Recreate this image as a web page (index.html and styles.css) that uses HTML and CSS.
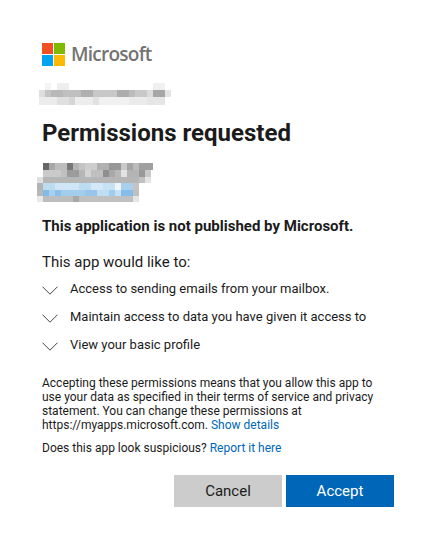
FILE: index.html
```html
<!DOCTYPE html>
<html lang="en">
<head>
<meta charset="utf-8">
<title>Permissions requested</title>
<link rel="stylesheet" href="styles.css">
</head>
<body>
<main class="card">
  <div class="brand">
    <svg class="logo" width="23" height="23" viewBox="0 0 23 23" aria-hidden="true">
      <rect width="11" height="11" fill="#f25022"/>
      <rect x="12" width="11" height="11" fill="#7fba00"/>
      <rect y="12" width="11" height="11" fill="#00a4ef"/>
      <rect x="12" y="12" width="11" height="11" fill="#ffb900"/>
    </svg>
    <span class="wordmark">Microsoft</span>
  </div>
  <svg class="blob blob-account" width="132" height="23" viewBox="0 0 132 23" aria-hidden="true">
    <g class="pixels">
      <rect x="0" y="0" width="132" height="23" fill="#fff"/>
      <rect x="6" y="0" width="6" height="7" fill="#f4f4f4"/>
      <rect x="18" y="0" width="12" height="7" fill="#eee"/>
      <rect x="114" y="0" width="12" height="7" fill="#f0f0f0"/>
      <rect x="0" y="7" width="6" height="7" fill="#dedede"/>
      <rect x="6" y="7" width="6" height="7" fill="#c4c4c4"/>
      <rect x="12" y="7" width="12" height="7" fill="#b8b8b8"/>
      <rect x="24" y="7" width="18" height="7" fill="#c0c0c0"/>
      <rect x="42" y="7" width="12" height="7" fill="#b0b0b0"/>
      <rect x="54" y="7" width="24" height="7" fill="#c8c8c8"/>
      <rect x="78" y="7" width="12" height="7" fill="#adadad"/>
      <rect x="90" y="7" width="6" height="7" fill="#bcbcbc"/>
      <rect x="96" y="7" width="12" height="7" fill="#c9c9c9"/>
      <rect x="108" y="7" width="6" height="7" fill="#dcdcdc"/>
      <rect x="114" y="7" width="12" height="7" fill="#a6a6a6"/>
      <rect x="126" y="7" width="6" height="7" fill="#e4e4e4"/>
      <rect x="0" y="14" width="18" height="8" fill="#ececec"/>
      <rect x="18" y="14" width="12" height="8" fill="#e0e0e0"/>
      <rect x="30" y="14" width="6" height="8" fill="#d6d6d6"/>
      <rect x="36" y="14" width="18" height="8" fill="#ededed"/>
      <rect x="54" y="14" width="6" height="8" fill="#e2e2e2"/>
      <rect x="60" y="14" width="30" height="8" fill="#f1f1f1"/>
      <rect x="90" y="14" width="18" height="8" fill="#ebebeb"/>
      <rect x="108" y="14" width="18" height="8" fill="#e6e6e6"/>
    </g>
  </svg>
  <h1 class="title">Permissions requested</h1>
  <svg class="blob blob-app" width="116" height="39" viewBox="0 0 116 39" aria-hidden="true">
    <g class="pixels">
      <rect x="6" y="0" width="6" height="7" fill="#666"/>
      <rect x="12" y="0" width="6" height="7" fill="#a8a8a8"/>
      <rect x="18" y="0" width="12" height="7" fill="#bdbdbd"/>
      <rect x="30" y="0" width="6" height="7" fill="#777"/>
      <rect x="36" y="0" width="6" height="7" fill="#b4b4b4"/>
      <rect x="42" y="0" width="6" height="7" fill="#c4c4c4"/>
      <rect x="48" y="0" width="12" height="7" fill="#cdcdcd"/>
      <rect x="60" y="0" width="12" height="7" fill="#b0b0b0"/>
      <rect x="72" y="0" width="12" height="7" fill="#979797"/>
      <rect x="84" y="0" width="6" height="7" fill="#c8c8c8"/>
      <rect x="90" y="0" width="6" height="7" fill="#a4a4a4"/>
      <rect x="96" y="0" width="6" height="7" fill="#bbb"/>
      <rect x="102" y="0" width="14" height="7" fill="#a0a0a0"/>
      <rect x="6" y="7" width="18" height="7" fill="#cacaca"/>
      <rect x="24" y="7" width="6" height="7" fill="#c0c0c0"/>
      <rect x="30" y="7" width="12" height="7" fill="#9c9c9c"/>
      <rect x="42" y="7" width="6" height="7" fill="#b6b6b6"/>
      <rect x="48" y="7" width="6" height="7" fill="#d4d4d4"/>
      <rect x="54" y="7" width="12" height="7" fill="#c0c0c0"/>
      <rect x="66" y="7" width="6" height="7" fill="#8f8f8f"/>
      <rect x="72" y="7" width="6" height="7" fill="#a8a8a8"/>
      <rect x="78" y="7" width="6" height="7" fill="#b8b8b8"/>
      <rect x="84" y="7" width="6" height="7" fill="#e2e2e2"/>
      <rect x="90" y="7" width="12" height="7" fill="#b4b4b4"/>
      <rect x="102" y="7" width="6" height="7" fill="#999"/>
      <rect x="108" y="7" width="6" height="7" fill="#c8c8c8"/>
      <rect x="0" y="14" width="6" height="6" fill="#e0e0e0"/>
      <rect x="6" y="14" width="96" height="6" fill="#b6b6b6"/>
      <rect x="102" y="14" width="6" height="6" fill="#c0c0c0"/>
      <rect x="108" y="14" width="6" height="6" fill="#e4e4e4"/>
      <rect x="0" y="20" width="6" height="7" fill="#b4b4b4"/>
      <rect x="6" y="20" width="12" height="7" fill="#bcdcf2"/>
      <rect x="18" y="20" width="24" height="7" fill="#cfe6f6"/>
      <rect x="42" y="20" width="12" height="7" fill="#bcdcf2"/>
      <rect x="54" y="20" width="12" height="7" fill="#d4e9f7"/>
      <rect x="66" y="20" width="12" height="7" fill="#c6e1f4"/>
      <rect x="78" y="20" width="6" height="7" fill="#eef6fb"/>
      <rect x="84" y="20" width="12" height="7" fill="#a8d0ee"/>
      <rect x="96" y="20" width="6" height="7" fill="#c4c4c4"/>
      <rect x="0" y="27" width="6" height="6" fill="#b8b8b8"/>
      <rect x="6" y="27" width="6" height="6" fill="#82bbe8"/>
      <rect x="12" y="27" width="6" height="6" fill="#a8d0ee"/>
      <rect x="18" y="27" width="6" height="6" fill="#8cc0ea"/>
      <rect x="24" y="27" width="24" height="6" fill="#a2cded"/>
      <rect x="48" y="27" width="12" height="6" fill="#98c6eb"/>
      <rect x="60" y="27" width="12" height="6" fill="#c0ddf3"/>
      <rect x="72" y="27" width="6" height="6" fill="#a0ccee"/>
      <rect x="78" y="27" width="6" height="6" fill="#c6e1f4"/>
      <rect x="84" y="27" width="12" height="6" fill="#86bcea"/>
      <rect x="96" y="27" width="6" height="6" fill="#c0c0c0"/>
      <rect x="0" y="33" width="6" height="6" fill="#e8e8e8"/>
      <rect x="6" y="33" width="30" height="6" fill="#bdbdbd"/>
      <rect x="36" y="33" width="6" height="6" fill="#a8a8a8"/>
      <rect x="42" y="33" width="54" height="6" fill="#c0c0c0"/>
      <rect x="96" y="33" width="6" height="6" fill="#e4e4e4"/>
    </g>
  </svg>
  <p class="warning">This application is not published by Microsoft.</p>
  <p class="lead">This app would like to:</p>
  <ul class="scopes">
    <li class="scope"><svg class="chevron" width="16" height="9" viewBox="0 0 16 9" aria-hidden="true"><path d="M.5.7 8 8.2 15.5.7"/></svg><span>Access to sending emails from your mailbox.</span></li>
    <li class="scope"><svg class="chevron" width="16" height="9" viewBox="0 0 16 9" aria-hidden="true"><path d="M.5.7 8 8.2 15.5.7"/></svg><span>Maintain access to data you have given it access to</span></li>
    <li class="scope"><svg class="chevron" width="16" height="9" viewBox="0 0 16 9" aria-hidden="true"><path d="M.5.7 8 8.2 15.5.7"/></svg><span>View your basic profile</span></li>
  </ul>
  <p class="notice">Accepting these permissions means that you allow this app to use your data as specified in their terms of service and privacy statement. You can change these permissions at https://myapps.microsoft.com. <a href="#">Show details</a></p>
  <p class="notice suspicious">Does this app look suspicious? <a href="#">Report it here</a></p>
  <div class="actions">
    <button class="btn btn-cancel" type="button">Cancel</button>
    <button class="btn btn-accept" type="button">Accept</button>
  </div>
</main>
</body>
</html>
```

FILE: styles.css
```css
* { box-sizing: border-box; }
html, body { margin: 0; padding: 0; background: #fff; }
body { font-family: Roboto, "Liberation Sans", sans-serif; color: #1b1b1b; width: 436px; height: 551px; overflow: hidden; }
.card { padding: 43px 42px 0; display: flex; flex-direction: column; }
.brand { display: flex; align-items: center; gap: 6px; height: 23px; }
.logo { display: block; flex: none; }
.wordmark { font-family: "Open Sans", sans-serif; font-weight: 600; font-size: 19px; line-height: 23px; color: #737373; letter-spacing: -.75px; }
.blob { display: block; flex: none; }
.pixels { filter: blur(.6px); }
.blob-account { margin: 17px 0 1px -3px; }
.title { margin: 11px 0 0; font-size: 24px; line-height: 30px; font-weight: 700; }
.blob-app { margin: 15px 0 0 -5px; }
.warning { margin: 14px 0 0; font-size: 15px; line-height: 20px; font-weight: 700; }
.lead { margin: 16px 0 0; font-size: 15px; line-height: 20px; }
.scopes { list-style: none; margin: 7px 0 0; padding: 0; display: flex; flex-direction: column; gap: 8px; }
.scope { display: flex; align-items: center; gap: 12px; font-size: 13px; line-height: 20px; }
.chevron { flex: none; fill: none; stroke: #444; stroke-width: 1; margin-top: 3px; }
.notice { margin: 21px 0 0; font-size: 12px; line-height: 14px; }
.suspicious { margin-top: 9px; }
a { color: #0067b8; text-decoration: none; }
.actions { display: flex; justify-content: flex-end; gap: 4px; margin-top: 20px; }
.btn { width: 108px; height: 32px; border: 0; padding: 0; font: 400 15px/32px Roboto, sans-serif; }
.btn-cancel { background: #ccc; color: #1b1b1b; }
.btn-accept { background: #0067b8; color: #fff; }
```
